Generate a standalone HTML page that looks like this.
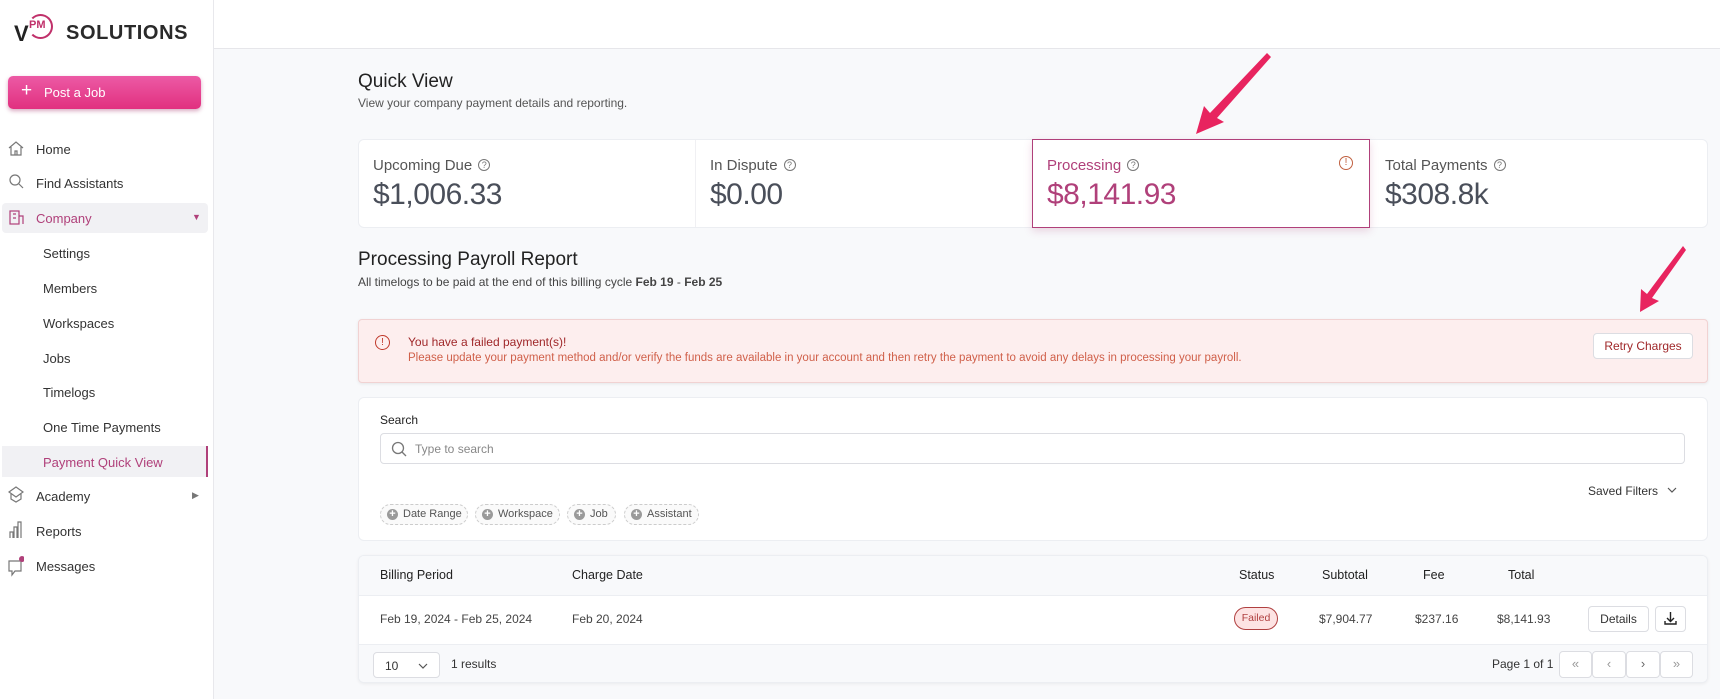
<!DOCTYPE html>
<html><head><meta charset="utf-8"><style>
*{box-sizing:border-box;margin:0;padding:0}
body{width:1720px;height:699px;overflow:hidden;font-family:"Liberation Sans",sans-serif;background:#f8f9fb;color:#333;position:relative}
.abs{position:absolute}
.side{left:0;top:0;width:214px;height:699px;background:#fff;border-right:1px solid #e8e8ec}
.top{left:214px;top:0;width:1506px;height:49px;background:#fff;border-bottom:1px solid #e6e6ea}
.nav{position:absolute;font-size:13px;color:#333;white-space:nowrap}
.card{background:#fff;border:1px solid #eceef2;border-radius:6px}
.lbl{font-size:15px;color:#555}
.val{font-size:30px;color:#4a4f5a;letter-spacing:-0.5px}
.q{display:inline-block;width:12px;height:12px;border:1.3px solid #777;border-radius:50%;font-size:9px;text-align:center;line-height:10px;vertical-align:2px;margin-left:6px;color:#777}
.chip{position:absolute;top:504px;height:21px;border:1px dashed #ccc;border-radius:11px;font-size:11px;color:#555;padding:3px 0 0 22px;background:#fafafa;white-space:nowrap}
.chip:before{content:"+";position:absolute;left:6px;top:4px;width:11px;height:11px;border-radius:50%;background:#9a9a9a;color:#fff;font-size:11px;line-height:11px;text-align:center;font-weight:bold}
.th{position:absolute;top:568px;font-size:12.5px;color:#222}
.td{position:absolute;top:612px;font-size:12px;color:#444}
.btn{position:absolute;background:#fff;border:1px solid #dcdde2;border-radius:4px}
</style></head><body>
<div class="abs side"></div>
<div class="abs top"></div>
<!-- logo -->
<div class="abs" style="left:14px;top:21px;font-size:22px;font-weight:bold;color:#222">V</div>
<div class="abs" style="left:28px;top:14px;width:25px;height:25px;border:2px solid #c0306a;border-left-color:transparent;border-radius:50%"></div>
<div class="abs" style="left:29px;top:19px;font-size:11px;color:#c0306a;font-weight:bold">PM</div>
<div class="abs" style="left:66px;top:22px;font-size:20px;font-weight:bold;color:#2a2a2a;letter-spacing:0.6px">SOLUTIONS</div>
<div class="abs" style="left:8px;top:76px;width:193px;height:33px;border-radius:5px;background:linear-gradient(#ec5aa5,#e1307f);box-shadow:0 2px 4px rgba(160,40,100,.4)"></div>
<div class="abs" style="left:21px;top:80px;color:#fff;font-size:19px">+</div>
<div class="abs" style="left:44px;top:85px;color:#fff;font-size:13px">Post a Job</div>
<!-- nav -->
<div class="abs" style="left:2px;top:203px;width:206px;height:30px;background:#f1f1f4;border-radius:4px"></div>
<div class="abs" style="left:2px;top:446px;width:206px;height:31px;background:#f1f1f4"></div>
<div class="abs" style="left:206px;top:446px;width:2px;height:31px;background:#b0407a"></div>
<svg class="abs" style="left:8px;top:140px" width="16" height="440" fill="none" stroke="#777" stroke-width="1.2">
<path d="M1 8 L8 2 L15 8 M3 7 V15 H13 V7 M7 15 V11 H9 V15"/>
<circle cx="7" cy="40" r="5"/><path d="M11 44 L15 48"/>
<rect x="2" y="71" width="9" height="13" stroke="#b0407a"/><path d="M11 76 H15 V84 M5 74 H8 M5 78 H8" stroke="#b0407a"/>
<path d="M1 352 L8 347 L15 352 L8 357 Z M3 354 V359 L8 362 L13 359 V354"/>
<path d="M2 398 V392 H5 V398 M6 398 V387 H9 V398 M10 398 V382 H13 V398"/>
<path d="M1 421 H13 V431 H7 L4 435 V431 H1 Z"/><circle cx="14" cy="419" r="3" fill="#b0407a" stroke="none"/>
</svg>
<div class="nav" style="left:36px;top:142px">Home</div>
<div class="nav" style="left:36px;top:176px">Find Assistants</div>
<div class="nav" style="left:36px;top:211px;color:#b0407a">Company</div>
<div class="abs" style="left:192px;top:212px;font-size:9px;color:#b0407a">▼</div>
<div class="nav" style="left:43px;top:246px">Settings</div>
<div class="nav" style="left:43px;top:281px">Members</div>
<div class="nav" style="left:43px;top:316px">Workspaces</div>
<div class="nav" style="left:43px;top:351px">Jobs</div>
<div class="nav" style="left:43px;top:385px">Timelogs</div>
<div class="nav" style="left:43px;top:420px">One Time Payments</div>
<div class="nav" style="left:43px;top:455px;color:#b0407a">Payment Quick View</div>
<div class="nav" style="left:36px;top:489px">Academy</div>
<div class="abs" style="left:192px;top:490px;font-size:9px;color:#777">▶</div>
<div class="nav" style="left:36px;top:524px">Reports</div>
<div class="nav" style="left:36px;top:559px">Messages</div>
<!-- main -->
<div class="abs" style="left:358px;top:71px;font-size:19px;color:#222">Quick View</div>
<div class="abs" style="left:358px;top:96px;font-size:12px;color:#555">View your company payment details and reporting.</div>
<div class="abs card" style="left:358px;top:139px;width:1350px;height:89px"></div>
<div class="abs" style="left:695px;top:140px;width:1px;height:87px;background:#f0f0f3"></div>
<div class="abs" style="left:1032px;top:139px;width:338px;height:89px;background:#fff;border:1px solid #b0407a;box-shadow:0 3px 8px rgba(176,64,122,.2)"></div>
<div class="abs lbl" style="left:373px;top:157px">Upcoming Due<span class="q">?</span></div>
<div class="abs val" style="left:373px;top:178px">$1,006.33</div>
<div class="abs lbl" style="left:710px;top:157px">In Dispute<span class="q">?</span></div>
<div class="abs val" style="left:710px;top:178px">$0.00</div>
<div class="abs lbl" style="left:1047px;top:157px;color:#b0407a">Processing<span class="q">?</span></div>
<div class="abs" style="left:1339px;top:156px;width:14px;height:14px;border:1.3px solid #c06040;border-radius:50%;font-size:10px;color:#c06040;text-align:center;line-height:12px">!</div>
<div class="abs val" style="left:1047px;top:178px;color:#b0407a">$8,141.93</div>
<div class="abs lbl" style="left:1385px;top:157px">Total Payments<span class="q">?</span></div>
<div class="abs val" style="left:1385px;top:178px">$308.8k</div>
<div class="abs" style="left:358px;top:249px;font-size:19px;color:#222">Processing Payroll Report</div>
<div class="abs" style="left:358px;top:275px;font-size:12px;color:#444">All timelogs to be paid at the end of this billing cycle <b>Feb 19</b> - <b>Feb 25</b></div>
<!-- alert -->
<div class="abs" style="left:358px;top:319px;width:1350px;height:64px;background:#fdeeee;border:1px solid #f1d2d2;border-radius:4px;box-shadow:0 1px 3px rgba(0,0,0,.08)"></div>
<div class="abs" style="left:375px;top:335px;width:15px;height:15px;border:1.4px solid #c0392b;border-radius:50%;font-size:10px;color:#c0392b;text-align:center;line-height:13px">!</div>
<div class="abs" style="left:408px;top:335px;font-size:12px;color:#a0282a">You have a failed payment(s)!</div>
<div class="abs" style="left:408px;top:352px;font-size:11.5px;color:#d0604a">Please update your payment method and/or verify the funds are available in your account and then retry the payment to avoid any delays in processing your payroll.</div>
<div class="btn" style="left:1593px;top:333px;width:100px;height:26px;font-size:12px;color:#a0282a;text-align:center;line-height:24px">Retry Charges</div>
<!-- search -->
<div class="abs card" style="left:358px;top:397px;width:1350px;height:144px"></div>
<div class="abs" style="left:380px;top:413px;font-size:12px;color:#222">Search</div>
<div class="abs" style="left:380px;top:433px;width:1305px;height:31px;background:#fff;border:1px solid #dcdde2;border-radius:4px"></div>
<svg class="abs" style="left:391px;top:441px" width="16" height="16" fill="none" stroke="#777" stroke-width="1.3"><circle cx="7" cy="7" r="5.5"/><path d="M11 11 L15 15"/></svg>
<div class="abs" style="left:415px;top:442px;font-size:12px;color:#888">Type to search</div>
<div class="abs" style="left:1588px;top:484px;font-size:12px;color:#333">Saved Filters</div>
<svg class="abs" style="left:1667px;top:486px" width="10" height="8" fill="none" stroke="#555" stroke-width="1.2"><path d="M1 2 L5 6 L9 2"/></svg>
<div class="chip" style="left:380px;width:88px">Date Range</div>
<div class="chip" style="left:475px;width:85px">Workspace</div>
<div class="chip" style="left:567px;width:49px">Job</div>
<div class="chip" style="left:624px;width:75px">Assistant</div>
<!-- table -->
<div class="abs card" style="left:358px;top:555px;width:1350px;height:128px;overflow:hidden;box-shadow:0 1px 3px rgba(0,0,0,.06)">
<div style="position:absolute;left:0;top:0;width:100%;height:40px;background:#f8f9fb;border-bottom:1px solid #eceef2"></div>
<div style="position:absolute;left:0;top:88px;width:100%;height:40px;background:#f8f9fb;border-top:1px solid #eceef2"></div>
</div>
<div class="th" style="left:380px">Billing Period</div>
<div class="th" style="left:572px">Charge Date</div>
<div class="th" style="left:1239px">Status</div>
<div class="th" style="left:1322px">Subtotal</div>
<div class="th" style="left:1423px">Fee</div>
<div class="th" style="left:1508px">Total</div>
<div class="td" style="left:380px">Feb 19, 2024 - Feb 25, 2024</div>
<div class="td" style="left:572px">Feb 20, 2024</div>
<div class="abs" style="left:1234px;top:607px;width:44px;height:23px;border:1px solid #b04040;border-radius:12px;background:#fde3e3;font-size:10.5px;color:#b04040;text-align:center;line-height:21px">Failed</div>
<div class="td" style="left:1319px">$7,904.77</div>
<div class="td" style="left:1415px">$237.16</div>
<div class="td" style="left:1497px">$8,141.93</div>
<div class="btn" style="left:1588px;top:606px;width:61px;height:26px;font-size:12px;text-align:center;line-height:24px">Details</div>
<div class="btn" style="left:1655px;top:606px;width:31px;height:26px"></div>
<svg class="abs" style="left:1663px;top:611px" width="15" height="15" fill="none" stroke="#222" stroke-width="1.4"><path d="M7.5 1 V10 M4 7 L7.5 10.5 L11 7 M2 10 V13 H13 V10"/></svg>
<div class="btn" style="left:373px;top:652px;width:67px;height:26px;font-size:12px;padding:6px 0 0 11px">10</div>
<svg class="abs" style="left:418px;top:662px" width="10" height="8" fill="none" stroke="#555" stroke-width="1.2"><path d="M1 2 L5 6 L9 2"/></svg>
<div class="abs" style="left:451px;top:657px;font-size:12px;color:#333">1 results</div>
<div class="abs" style="left:1492px;top:657px;font-size:12px;color:#333">Page 1 of 1</div>
<div class="btn" style="left:1559px;top:651px;width:33px;height:27px;font-size:13px;color:#999;text-align:center;line-height:24px">«</div>
<div class="btn" style="left:1592px;top:651px;width:34px;height:27px;font-size:13px;color:#999;text-align:center;line-height:24px">‹</div>
<div class="btn" style="left:1626px;top:651px;width:34px;height:27px;font-size:13px;color:#666;text-align:center;line-height:24px">›</div>
<div class="btn" style="left:1660px;top:651px;width:33px;height:27px;font-size:13px;color:#999;text-align:center;line-height:24px">»</div>
<!-- arrows -->
<svg class="abs" style="left:0;top:0" width="1720" height="699">
<polygon points="1267,53 1271,57 1217,118 1224,122 1196,134 1204,106 1210,113" fill="#e8245f"/>
<polygon points="1683,246 1686,250 1652,298 1659,301 1640,312 1641,289 1647,294" fill="#e8245f"/>
</svg>
</body></html>
